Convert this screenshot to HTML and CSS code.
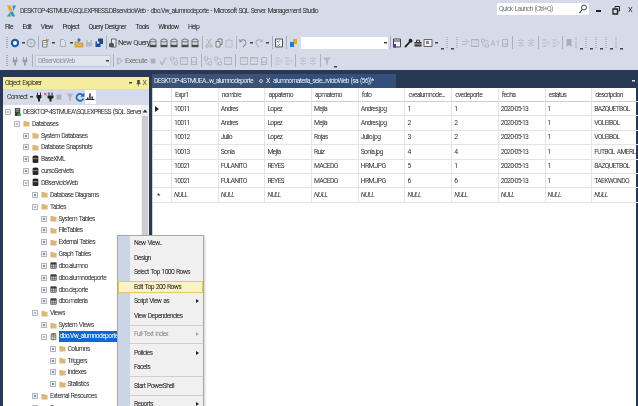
FILE: index.html
```html
<!DOCTYPE html>
<html lang="en">
<head>
<meta charset="utf-8">
<title>SSMS</title>
<link rel="stylesheet" href="styles.css">
</head>
<body>
<svg class="defs" aria-hidden="true">
  <symbol id="back" viewBox="0 0 10 10"><circle cx="5" cy="5" r="4.2" fill="#1c5fa8"/><circle cx="5" cy="5" r="2" fill="#fff"/></symbol>
  <symbol id="fwd" viewBox="0 0 10 10"><circle cx="5" cy="5" r="3.8" fill="none" stroke="#a4a9b2" stroke-width="1.4"/><circle cx="5" cy="5" r="1.2" fill="#b8bcc6"/></symbol>
  <symbol id="newp" viewBox="0 0 10 10"><path d="M2.500 2.500h4.500v6.500H2.500z" fill="#eef0f4" stroke="#666" stroke-width=".8"/><path d="M2.500 4.500h4.500M2.500 6.500h4.500" stroke="#888" stroke-width=".7"/><path d="M6 0l1 1.500L9 1 8 3l1 1-3-.4z" fill="#c98a1f"/></symbol>
  <symbol id="doc" viewBox="0 0 10 10"><path d="M2.500 1.500h3l2 2v5h-5z" fill="#dfe3ec" stroke="#a5abb7"/></symbol>
  <symbol id="open" viewBox="0 0 10 10"><path d="M1 4h3l1 1h4v4H1z" fill="#e3b04b" stroke="#b9852a" stroke-width=".6"/><path d="M5 4V1M3.500 2.300L5 .8l1.500 1.500" fill="none" stroke="#1f6fb5" stroke-width="1.200"/></symbol>
  <symbol id="save" viewBox="0 0 10 10"><path d="M2 2h6v6.500H2z" fill="#b4b9c3"/><path d="M3.500 2h3v2h-3z" fill="#dfe3ec"/></symbol>
  <symbol id="saveall" viewBox="0 0 10 10"><path d="M4 0.500h5V6H4z" fill="#23477f"/><path d="M1.500 3.500h5V9H1.500z" fill="#1c4f9c"/><path d="M3 3.500h2.200v2H3z" fill="#e8ecf4"/></symbol>
  <symbol id="nq" viewBox="0 0 10 10"><path d="M3.500 1h4.500v8H3.500z" fill="#e6e8ee" stroke="#444" stroke-width=".8"/><ellipse cx="3.500" cy="6" rx="2.500" ry="1.100" fill="#444"/><path d="M1 6v2.500c0 1 5 1 5 0V6" fill="#555"/></symbol>
  <symbol id="dbq" viewBox="0 0 10 10"><ellipse cx="5" cy="2.500" rx="3" ry="1.500" fill="#d6dcea" stroke="#555" stroke-width=".8"/><path d="M2 2.500V7M8 2.500V7" stroke="#555" stroke-width=".8"/><path d="M1.500 6.800h7v2.400h-7z" fill="#4a4a4a"/></symbol>
  <symbol id="cut" viewBox="0 0 10 10"><path d="M3 1l3.500 5.500M7 1L3.500 6.500" stroke="#b0b4be" fill="none"/><circle cx="3" cy="8" r="1.300" fill="none" stroke="#b0b4be"/><circle cx="7" cy="8" r="1.300" fill="none" stroke="#b0b4be"/></symbol>
  <symbol id="copy" viewBox="0 0 10 10"><path d="M4 1h4v5.500H4z" fill="#e3e7ef" stroke="#707070" stroke-width=".9"/><path d="M2 3.500h4v5.500H2z" fill="#e3e7ef" stroke="#707070" stroke-width=".9"/></symbol>
  <symbol id="paste" viewBox="0 0 10 10"><path d="M2 2.500h6v6.500H2z" fill="none" stroke="#b8bcc6"/><path d="M3.500 1h3v2.500h-3z" fill="#c6cad3"/></symbol>
  <symbol id="undo" viewBox="0 0 10 10"><path d="M2 3c2-2 6-1.500 6 1.500C8 6.500 6.500 7.500 5 9" fill="none" stroke="#8f949e" stroke-width="1.100"/><path d="M1 1l.5 3.500L4.500 3.500z" fill="#8f949e"/></symbol>
  <symbol id="redo" viewBox="0 0 10 10"><path d="M8 3C6 1 2 1.500 2 4.500 2 6.500 3.500 7.500 5 9" fill="none" stroke="#adb1bb" stroke-width="1.100"/><path d="M9 1l-.5 3.500L5.500 3.500z" fill="#adb1bb"/></symbol>
  <symbol id="box" viewBox="0 0 10 10"><path d="M1.500 1h7v8h-7z" fill="#eef0f5" stroke="#555"/><path d="M3 3l1.200 1.200L6 2.500M3 6.500l1.200 1.200L6 6" fill="none" stroke="#555" stroke-width=".7"/></symbol>
  <symbol id="ffile" viewBox="0 0 10 10"><path d="M5 1h4v5H5z" fill="#e5a52f"/><path d="M2 4h4v5H2z" fill="#2d77c2"/></symbol>
  <symbol id="win" viewBox="0 0 10 10"><path d="M1.500 1h7v8h-7z" fill="#eef0f5" stroke="#444"/><path d="M1.500 3h7" stroke="#444"/><path d="M1 6h3v3.500H1z" fill="#6a2c8f"/></symbol>
  <symbol id="wrench" viewBox="0 0 10 10"><path d="M8.800 1.200 7 .6 5.600 2 6 3.600 1.500 8.200l.4 1.300 1.200-.2L7.400 4.500l1.300.1L9.600 3z" fill="#1d1d1d"/></symbol>
  <symbol id="tool" viewBox="0 0 10 10"><path d="M1.500 4h7v4.500h-7z" fill="#333"/><path d="M3.500 4V2.200h3V4" fill="none" stroke="#333"/><path d="M1.500 6h7" stroke="#ddd" stroke-width=".8"/></symbol>
  <symbol id="wnd" viewBox="0 0 10 10"><path d="M1 1.500h8v7H1z" fill="#eef0f5" stroke="#666"/><path d="M3 3h3v3H3z" fill="#888"/></symbol>
  <symbol id="g1" viewBox="0 0 10 10"><path d="M2 3.500h5M2 6.500h4" stroke="#b8bdc7" stroke-width="1" fill="none"/><path d="M5.500 1l3 2.500-3 2.500" fill="none" stroke="#b8bdc7"/></symbol>
  <symbol id="g2" viewBox="0 0 10 10"><path d="M1.500 1h3v3h-3zM5.500 6h3v3h-3z" fill="none" stroke="#b5bac4"/><path d="M3 4v4h2.500M5 2.500h3v3" fill="none" stroke="#b5bac4" stroke-width=".7"/></symbol>
  <symbol id="g3" viewBox="0 0 10 10"><path d="M1.500 1.500h7v7h-7z" fill="#c8ccd6" stroke="#adb2bc"/><path d="M1.500 4h7M1.500 6.500h7" stroke="#e0e4ed"/></symbol>
  <symbol id="g4" viewBox="0 0 10 10"><path d="M2.500 1.500h5v7h-5z" fill="none" stroke="#adb2bc"/><path d="M2.500 6h5" stroke="#adb2bc"/></symbol>
  <symbol id="g5" viewBox="0 0 10 10"><path d="M2 5h6M2 2.500h2M6 2.500h2M2 7.500h2M6 7.500h2M5 1v8" stroke="#b8bdc7" stroke-width=".9" fill="none"/></symbol>
  <symbol id="g6" viewBox="0 0 10 10"><path d="M2.500 2h4M2.500 5h4M2.500 8h4" stroke="#b5bac4"/><path d="M7.500 3l1.500 2-1.500 2" fill="none" stroke="#b5bac4" stroke-width=".7"/></symbol>
  <symbol id="mark" viewBox="0 0 10 10"><path d="M2.500 1h5v8L5 7 2.500 9z" fill="#a8adb8"/></symbol>
  <symbol id="txt" viewBox="0 0 10 10"><path d="M1 8l2-6 2 6M2 6h2M6.500 3h3M8 3v5" fill="none" stroke="#b5bac4"/></symbol>
  <symbol id="plug" viewBox="0 0 10 10"><path d="M3.500 1v3M6.500 1v3" stroke="#9a9fa9"/><path d="M2.500 3.500h5v2L6 7v2.500H4V7L2.500 5.500z" fill="#9a9fa9"/></symbol>
  <symbol id="plugd" viewBox="0 0 10 10"><path d="M3.500 .5v3M6.500 .5v3" stroke="#333"/><path d="M2.500 3h5v2.500L6 7v2.500H4V7L2.500 5.500z" fill="#222"/></symbol>
  <symbol id="plugx" viewBox="0 0 10 10"><path d="M5 .5v3M8 .5v3" stroke="#222"/><path d="M3.500 3.500h6V6L7.500 7v2.500h-2V7l-2-1z" fill="#222"/><path d="M0 .8l2.500 2.500M2.500.8L0 3.300" stroke="#c43a2f" stroke-width=".9"/></symbol>
  <symbol id="stop" viewBox="0 0 10 10"><path d="M2.500 2.500h5v5h-5z" fill="#adb1bb"/></symbol>
  <symbol id="funnel" viewBox="0 0 10 10"><path d="M1 1.500h8L6 5v4L4 8V5z" fill="#b4b8c1"/></symbol>
  <symbol id="refresh" viewBox="0 0 10 10"><path d="M8 3.500A3.500 3.500 0 1 0 8.300 6.500" fill="none" stroke="#1c6cb8" stroke-width="1.700"/><path d="M9.300 .6v4.200H5.300z" fill="#1c6cb8"/></symbol>
  <symbol id="activity" viewBox="0 0 10 10"><path d="M.5 7.500h9" stroke="#333"/><path d="M2 7V5.500h1.500V7zM4.200 7V1.500h1.500V7zM6.500 7V4.500H8V7z" fill="#333"/></symbol>
  <symbol id="play" viewBox="0 0 10 10"><path d="M3 1.500L8 5 3 8.500z" fill="none" stroke="#a4a9b3"/></symbol>
  <symbol id="check" viewBox="0 0 10 10"><path d="M2 5.500L4 8.500 8 1.500" fill="none" stroke="#adb2bc" stroke-width="1.200"/></symbol>
  <symbol id="search" viewBox="0 0 10 10"><circle cx="6" cy="3.500" r="2.500" fill="none" stroke="#333" stroke-width=".9"/><path d="M4.200 5.500L1.500 9" stroke="#333" stroke-width="1.200"/></symbol>
  <symbol id="plus" viewBox="0 0 7 7"><path d="M.5.500h6v6h-6z" fill="#fff" stroke="#9aa0ac"/><path d="M2 3.500h3M3.500 2v3" stroke="#2d3a55" stroke-width=".8"/></symbol>
  <symbol id="minus" viewBox="0 0 7 7"><path d="M.5.500h6v6h-6z" fill="#fff" stroke="#9aa0ac"/><path d="M2 3.500h3" stroke="#2d3a55" stroke-width=".8"/></symbol>
  <symbol id="folder" viewBox="0 0 8 8"><path d="M.5 1h3l1 1h3v5.500h-7z" fill="#dcb67a"/></symbol>
  <symbol id="db" viewBox="0 0 8 10"><ellipse cx="4" cy="1.800" rx="3.300" ry="1.500" fill="#222"/><path d="M.7 1.800v6.300C.7 9.400 7.300 9.400 7.300 8.100V1.800z" fill="#2a2a2a"/><path d="M1.500 4h5" stroke="#bbb" stroke-width=".8"/></symbol>
  <symbol id="server" viewBox="0 0 8 10"><path d="M1 .5h6v9H1z" fill="#3a3a3a"/><path d="M2 2h4M2 4h4" stroke="#ddd" stroke-width=".8"/><circle cx="6" cy="7.800" r="2" fill="#2fa23a"/></symbol>
  <symbol id="table" viewBox="0 0 9 9"><path d="M1 1h7v7H1z" fill="#f2f2f2" stroke="#3a3a3a"/><path d="M1 3.300h7M1 5.600h7M3.300 1v7M5.700 1v7" stroke="#3a3a3a" stroke-width=".7"/><path d="M1 1h7v1.800H1z" fill="#3a3a3a"/></symbol>
  <symbol id="view" viewBox="0 0 9 9"><path d="M1.500 1h6v7.500h-6z" fill="#e8e8e8" stroke="#555"/><path d="M1.500 3h6M1.500 5h6M4.500 3v5" stroke="#555" stroke-width=".7"/><path d="M3 .5h3v1.500H3z" fill="#444"/></symbol>
  <symbol id="logo" viewBox="0 0 12 14"><path d="M1 1h4l2 5-3 2z" fill="#e8a92a"/><path d="M7 1h4L8 7z" fill="#2f8fd0"/><path d="M4 9l3-2 3 6H7z" fill="#2f8fd0"/><path d="M1 13l3-4 1.500 4z" fill="#5aa84a"/></symbol>
</svg>

<div class="app">
  <header class="title">
    <svg class="logo"><use href="#logo"/></svg>
    <span class="title-text">DESKTOP-4STMUEA\SQLEXPRESS.DBservicioWeb - dbo.Vw_alumnodeporte - Microsoft SQL Server Management Studio</span>
    <div class="quick"><span>Quick Launch (Ctrl+Q)</span><svg class="i"><use href="#search"/></svg></div>
    <div class="winbtns"><b class="min"></b><svg class="i restore" viewBox="0 0 10 10"><path d="M2 4h4.500v5H2z" fill="none" stroke="#222" stroke-width="1.300"/><path d="M4 3V1.500h4.500V6H7" fill="none" stroke="#222"/></svg><span class="close">X</span></div>
  </header>
  <nav class="menu"><span>File</span><span>Edit</span><span>View</span><span>Project</span><span>Query Designer</span><span>Tools</span><span>Window</span><span>Help</span></nav>

  <div class="tb">
    <u class="grip"></u>
    <svg class="i"><use href="#back"/></svg><em class="dd"></em><svg class="i"><use href="#fwd"/></svg><u class="sep"></u>
    <svg class="i"><use href="#newp"/></svg><em class="dd"></em><svg class="i m2"><use href="#doc"/></svg><em class="dd"></em><svg class="i"><use href="#open"/></svg><svg class="i"><use href="#save"/></svg><svg class="i"><use href="#saveall"/></svg><u class="sep"></u>
    <svg class="i"><use href="#nq"/></svg><span class="nq">New Query</span>
    <svg class="i"><use href="#dbq"/></svg><svg class="i m1"><use href="#dbq"/></svg><svg class="i"><use href="#dbq"/></svg><svg class="i m1"><use href="#dbq"/></svg><svg class="i"><use href="#dbq"/></svg><u class="sep"></u>
    <svg class="i"><use href="#cut"/></svg><svg class="i"><use href="#copy"/></svg><svg class="i"><use href="#paste"/></svg><u class="sep"></u>
    <svg class="i"><use href="#undo"/></svg><em class="dd"></em><svg class="i"><use href="#redo"/></svg><em class="dd"></em><u class="sep"></u>
    <svg class="i"><use href="#box"/></svg><u class="sep"></u><svg class="i"><use href="#ffile"/></svg>
    <div class="combo1"><em class="dd"></em></div><u class="sep"></u>
    <svg class="i"><use href="#win"/></svg><svg class="i m1"><use href="#wrench"/></svg><svg class="i"><use href="#tool"/></svg><svg class="i"><use href="#wnd"/></svg><em class="dd"></em>
    <em class="dd lo"></em><u class="grip g"></u><em class="dd lo"></em><u class="grip g"></u>
    <svg class="i m1"><use href="#g1"/></svg><svg class="i"><use href="#g3"/></svg><svg class="i"><use href="#g2"/></svg><svg class="i"><use href="#txt"/></svg><svg class="i"><use href="#g4"/></svg><u class="sep"></u>
    <svg class="i m2"><use href="#g5"/></svg><svg class="i"><use href="#g5"/></svg><u class="sep"></u><svg class="i"><use href="#g6"/></svg><svg class="i"><use href="#g6"/></svg><u class="sep"></u><svg class="i"><use href="#mark"/></svg>
    <u class="grip g"></u><em class="dd lo"></em><u class="grip g"></u><em class="dd lo"></em><u class="grip g"></u><em class="dd lo"></em><u class="grip g"></u><em class="dd lo"></em><u class="grip g"></u><em class="dd lo"></em>
  </div>
  <div class="tb tb2">
    <u class="grip"></u>
    <svg class="i"><use href="#plug"/></svg><svg class="i"><use href="#plug"/></svg><u class="sep"></u>
    <div class="combo2"><span>DBservicioWeb</span><em class="dd"></em></div><u class="sep"></u>
    <svg class="i n"><use href="#play"/></svg><span class="exec">Execute</span>
    <svg class="i"><use href="#stop"/></svg><svg class="i"><use href="#check"/></svg><svg class="i m1"><use href="#g2"/></svg><svg class="i"><use href="#g3"/></svg><svg class="i"><use href="#g4"/></svg><u class="sep"></u>
    <svg class="i"><use href="#g2"/></svg><svg class="i"><use href="#g2"/></svg><svg class="i"><use href="#g3"/></svg><u class="sep"></u>
    <svg class="i m2"><use href="#g3"/></svg><svg class="i"><use href="#g3"/></svg><svg class="i"><use href="#g4"/></svg><u class="sep"></u>
    <svg class="i"><use href="#g6"/></svg><svg class="i"><use href="#g6"/></svg><u class="sep"></u>
    <svg class="i m1"><use href="#g5"/></svg><svg class="i"><use href="#g5"/></svg><u class="sep"></u>
    <svg class="i"><use href="#funnel"/></svg><em class="dd lo"></em>
  </div>

  <main class="work">
    <section class="oe">
      <div class="oe-head"><span>Object Explorer</span><div class="oe-ctl"><em class="dd"></em><svg class="pin" viewBox="0 0 6 9"><path d="M1.500 1h3v4h1v1H3.300v3h-.6V6H.5V5h1z" fill="#444"/></svg><span class="ox">X</span></div></div>
      <div class="oe-tools"><span class="conn">Connect</span><em class="dd"></em><svg class="i"><use href="#plugd"/></svg><svg class="i"><use href="#plugx"/></svg><svg class="i"><use href="#stop"/></svg><svg class="i"><use href="#funnel"/></svg><svg class="i"><use href="#refresh"/></svg><span class="act"><svg class="i"><use href="#activity"/></svg></span></div>
      <div class="tree-wrap">
        <ul class="tree">
          <li class="l0"><svg class="x"><use href="#minus"/></svg><svg class="t srv"><use href="#server"/></svg><span>DESKTOP-4STMUEA\SQLEXPRESS (SQL Server 15</span></li>
          <li class="l1"><svg class="x"><use href="#minus"/></svg><svg class="t"><use href="#folder"/></svg><span>Databases</span></li>
          <li class="l2"><svg class="x"><use href="#plus"/></svg><svg class="t"><use href="#folder"/></svg><span>System Databases</span></li>
          <li class="l2"><svg class="x"><use href="#plus"/></svg><svg class="t"><use href="#folder"/></svg><span>Database Snapshots</span></li>
          <li class="l2"><svg class="x"><use href="#plus"/></svg><svg class="t"><use href="#db"/></svg><span>BaseXML</span></li>
          <li class="l2"><svg class="x"><use href="#plus"/></svg><svg class="t"><use href="#db"/></svg><span>cursoServlets</span></li>
          <li class="l2"><svg class="x"><use href="#minus"/></svg><svg class="t"><use href="#db"/></svg><span>DBservicioWeb</span></li>
          <li class="l3"><svg class="x"><use href="#plus"/></svg><svg class="t"><use href="#folder"/></svg><span>Database Diagrams</span></li>
          <li class="l3"><svg class="x"><use href="#minus"/></svg><svg class="t"><use href="#folder"/></svg><span>Tables</span></li>
          <li class="l4"><svg class="x"><use href="#plus"/></svg><svg class="t"><use href="#folder"/></svg><span>System Tables</span></li>
          <li class="l4"><svg class="x"><use href="#plus"/></svg><svg class="t"><use href="#folder"/></svg><span>FileTables</span></li>
          <li class="l4"><svg class="x"><use href="#plus"/></svg><svg class="t"><use href="#folder"/></svg><span>External Tables</span></li>
          <li class="l4"><svg class="x"><use href="#plus"/></svg><svg class="t"><use href="#folder"/></svg><span>Graph Tables</span></li>
          <li class="l4"><svg class="x"><use href="#plus"/></svg><svg class="t"><use href="#table"/></svg><span>dbo.alumno</span></li>
          <li class="l4"><svg class="x"><use href="#plus"/></svg><svg class="t"><use href="#table"/></svg><span>dbo.alumnodeporte</span></li>
          <li class="l4"><svg class="x"><use href="#plus"/></svg><svg class="t"><use href="#table"/></svg><span>dbo.deporte</span></li>
          <li class="l4"><svg class="x"><use href="#plus"/></svg><svg class="t"><use href="#table"/></svg><span>dbo.materia</span></li>
          <li class="l3"><svg class="x"><use href="#minus"/></svg><svg class="t"><use href="#folder"/></svg><span>Views</span></li>
          <li class="l4"><svg class="x"><use href="#plus"/></svg><svg class="t"><use href="#folder"/></svg><span>System Views</span></li>
          <li class="l4 sel"><svg class="x"><use href="#minus"/></svg><svg class="t"><use href="#view"/></svg><span>dbo.Vw_alumnodeporte</span></li>
          <li class="l5"><svg class="x"><use href="#plus"/></svg><svg class="t"><use href="#folder"/></svg><span>Columns</span></li>
          <li class="l5"><svg class="x"><use href="#plus"/></svg><svg class="t"><use href="#folder"/></svg><span>Triggers</span></li>
          <li class="l5"><svg class="x"><use href="#plus"/></svg><svg class="t"><use href="#folder"/></svg><span>Indexes</span></li>
          <li class="l5"><svg class="x"><use href="#plus"/></svg><svg class="t"><use href="#folder"/></svg><span>Statistics</span></li>
          <li class="l3"><svg class="x"><use href="#plus"/></svg><svg class="t"><use href="#folder"/></svg><span>External Resources</span></li>
          <li class="l3"><svg class="x"><use href="#plus"/></svg><svg class="t"><use href="#folder"/></svg><span>Synonyms</span></li>
        </ul>
        <div class="scroll"><svg class="up" viewBox="0 0 6 4"><path d="M3 .5L5.500 3.500H.5z" fill="#333"/></svg><div class="thumb"></div></div>
      </div>
    </section>

    <section class="doc">
      <div class="tabs">
        <div class="tab a"><span class="tname">DESKTOP-4STMUEA...w_alumnodeporte</span><i class="tpin"></i><span class="tx">X</span></div>
        <div class="tab b"><span>alumnomateria_sele...rvicioWeb (sa (56))*</span></div>
        <em class="dd w"></em>
      </div>
      <div class="grid">
        <div class="h"></div><div class="h">Expr1</div><div class="h">nombre</div><div class="h">appaterno</div><div class="h">apmaterno</div><div class="h">foto</div><div class="h">cvealumnode...</div><div class="h">cvedeporte</div><div class="h">fecha</div><div class="h">estatus</div><div class="h">descripcion</div>
        <div class="r"><svg class="rowm" viewBox="0 0 4 6"><path d="M0 0l4 3-4 3z" fill="#222"/></svg></div><div>10011</div><div>Andres</div><div>Lopez</div><div>Mejia</div><div>Andres.jpg</div><div>1</div><div>1</div><div>2020-05-13</div><div>1</div><div>BAZQUETBOL</div>
        <div class="r"></div><div>10011</div><div>Andres</div><div>Lopez</div><div>Mejia</div><div>Andres.jpg</div><div>2</div><div>2</div><div>2020-05-13</div><div>1</div><div>VOLEIBOL</div>
        <div class="r"></div><div>10012</div><div>Julio</div><div>Lopez</div><div>Rojas</div><div>Julio.jpg</div><div>3</div><div>2</div><div>2020-05-13</div><div>1</div><div>VOLEIBOL</div>
        <div class="r"></div><div>10013</div><div>Sonia</div><div>Mejia</div><div>Ruiz</div><div>Sonia.jpg</div><div>4</div><div>4</div><div>2020-05-13</div><div>1</div><div>FUTBOL AMERI...</div>
        <div class="r"></div><div>10021</div><div>FULANITO</div><div>REYES</div><div>MACEDO</div><div>HRM.JPG</div><div>5</div><div>1</div><div>2020-05-13</div><div>1</div><div>BAZQUETBOL</div>
        <div class="r"></div><div>10021</div><div>FULANITO</div><div>REYES</div><div>MACEDO</div><div>HRM.JPG</div><div>6</div><div>6</div><div>2020-05-13</div><div>1</div><div>TAEKWONDO</div>
        <div class="r star">*</div><div class="nl">NULL</div><div class="nl">NULL</div><div class="nl">NULL</div><div class="nl">NULL</div><div class="nl">NULL</div><div class="nl">NULL</div><div class="nl">NULL</div><div class="nl">NULL</div><div class="nl">NULL</div><div class="nl">NULL</div>
      </div>
    </section>
  </main>

  <div class="ctx">
    <div class="mi">New View...</div>
    <div class="mi">Design</div>
    <div class="mi">Select Top 1000 Rows</div>
    <div class="mi hot">Edit Top 200 Rows</div>
    <div class="mi arr">Script View as</div>
    <div class="mi">View Dependencies</div>
    <div class="ms"></div>
    <div class="mi off arr">Full-Text index</div>
    <div class="ms"></div>
    <div class="mi arr">Policies</div>
    <div class="mi">Facets</div>
    <div class="ms"></div>
    <div class="mi">Start PowerShell</div>
    <div class="ms"></div>
    <div class="mi arr">Reports</div>
  </div>
</div>
</body>
</html>
```
FILE: styles.css
```css
* { box-sizing: border-box; }
html, body { margin: 0; padding: 0; width: 638px; height: 406px; overflow: hidden; }
body { background: #293955; font-family: "Roboto", "Liberation Sans", sans-serif; font-size: 6.800px; letter-spacing: -.69px; word-spacing: .9px; color: #222; }
.defs { position: absolute; width: 0; height: 0; }
ul { list-style: none; margin: 0; padding: 0; }
em, u, i, b, s { font-style: normal; text-decoration: none; }

.app { position: relative; width: 638px; height: 406px; display: flex; flex-direction: column; overflow: hidden; background: #d5dbe9; filter: blur(.45px); }

.title { height: 21px; display: flex; align-items: center; padding-left: 6px; flex: none; }
.logo { width: 11px; height: 14px; margin-right: 3px; flex: none; }
.title-text { color: #333; white-space: nowrap; }
.quick { position: absolute; left: 497px; top: 3px; width: 92px; height: 12px; background: #fff; display: flex; align-items: center; justify-content: space-between; padding: 0 1px 0 2px; color: #777; }
.winbtns { position: absolute; left: 594px; top: 3px; display: flex; align-items: center; height: 13px; }
.min { display: block; width: 5px; height: 2px; background: #222; margin: 3px 10px 0 2px; }
.restore { margin-right: 7px; }
.close { font-size: 7.500px; letter-spacing: 0; }

.menu { height: 12px; flex: none; display: flex; align-items: center; gap: 9.600px; padding-left: 5px; color: #222; }

.tb { height: 17px; flex: none; display: flex; align-items: center; padding-left: 5px; margin-top: 1px; color: #444; }
.tb2 { margin-bottom: 1px; }
.i { width: 10px; height: 10px; flex: none; }
.i.m1 { margin-left: 1px; }
.i.m2 { margin-left: 2px; }
.i.n { width: 9px; }
.grip { display: block; width: 4px; height: 12px; flex: none; background: repeating-linear-gradient(#a5abb9 0 1px, transparent 1px 2px) center / 2px 100% no-repeat; }
.tb > .grip:first-child { margin-right: 1px; }
.grip.g { background-image: repeating-linear-gradient(#b6bcc9 0 1px, transparent 1px 2px); }
.sep { display: block; width: 4px; height: 13px; flex: none; background: linear-gradient(#a9b0bf, #a9b0bf) center / 1px 100% no-repeat; }
.dd { display: block; width: 6px; height: 10px; flex: none; background: linear-gradient(#444, #444) center / 3px 1.500px no-repeat; }
.dd.lo { height: 14px; background-position: center bottom; }
.dd.w { margin-left: auto; margin-right: 2px; background-image: linear-gradient(#ddd, #ddd); }
.nq { width: 30px; color: #333; white-space: nowrap; flex: none; font-size: 7.500px; letter-spacing: -.6px; }
.combo1 { width: 87px; height: 12px; margin-left: 3px; background: #fff; flex: none; display: flex; justify-content: flex-end; align-items: center; }
.combo2 { width: 76px; height: 12px; margin-left: 1px; flex: none; display: flex; justify-content: space-between; align-items: center; background: #dfe4ef; border: 1px solid #c2c8d6; padding-left: 2px; color: #8d929d; }
.exec { width: 24px; padding-left: 1px; color: #777; flex: none; font-size: 7.500px; letter-spacing: -.6px; }

.work { flex: 1; min-height: 0; display: flex; background: #293955; padding: 4px 0 0 3px; }

.oe { width: 146px; flex: none; display: flex; flex-direction: column; background: #fff; margin-top: 3px; }
.oe-head { height: 12px; flex: none; display: flex; align-items: center; justify-content: space-between; padding: 0 2px; background: #f5ec9d; color: #333; }
.oe-ctl { display: flex; align-items: center; gap: 2px; }
.pin { width: 5px; height: 8px; }
.ox { font-size: 7px; letter-spacing: 0; color: #555; }
.oe-tools { height: 16px; flex: none; display: flex; align-items: center; padding-left: 4px; background: #d5dbe9; }
.conn { width: 21px; color: #333; flex: none; }
.oe-tools .i { margin-right: .2px; }
.act { display: block; width: 11px; height: 14px; padding-top: 2px; background: #fff; }
.tree-wrap { flex: 1; min-height: 0; display: flex; overflow: hidden; }
.tree { width: 138px; flex: none; padding-top: 1px; overflow: hidden; }
.tree li { height: 11.850px; display: flex; align-items: center; white-space: nowrap; color: #333; }
.l0 { padding-left: 2px; }
.l1 { padding-left: 11px; }
.l2 { padding-left: 20px; }
.l3 { padding-left: 29px; }
.l4 { padding-left: 37.500px; }
.l5 { padding-left: 46.500px; }
.x { width: 6px; height: 6px; flex: none; margin-right: 3px; }
.t { width: 7px; height: 9px; flex: none; margin-right: 2px; }
.tree .srv { height: 10px; }
.tree .sel span { background: #0a69d4; color: #fff; padding: 0 1px; height: 11px; line-height: 11px; }
.scroll { width: 8px; flex: none; background: #f0f0f0; display: flex; flex-direction: column; align-items: center; }
.up { width: 6px; height: 4px; margin: 4px 0 3px; flex: none; }
.thumb { flex: 1; width: 6px; background: #cdcdcd; }

.doc { flex: 1; min-width: 0; display: flex; flex-direction: column; margin-left: 3px; }
.tabs { height: 14px; flex: none; display: flex; align-items: center; color: #e8edf5; }
.tab { height: 14px; display: flex; align-items: center; padding-left: 2px; flex: none; white-space: nowrap; }
.tab.a { width: 119px; background: #3c5275; }
.tab.b { width: 125px; background: #32507a; }
.tname { width: 103px; flex: none; }
.tpin { display: block; width: 4px; height: 4px; border: 1px solid #ccd; border-radius: 50%; margin: 0 3px 0 2px; flex: none; }
.tx { font-size: 7px; letter-spacing: 0; }
.grid { flex: 1; min-height: 0; margin-right: 2px; background: #fff; display: grid; grid-template-columns: 19px repeat(10, 46.700px); grid-template-rows: 14px; grid-auto-rows: 14.400px; align-content: start; border-left: 1px solid #d0d0d0; }
.grid > div { display: flex; align-items: center; padding-left: 2px; border-right: 1px solid #e4e4e4; border-bottom: 1px solid #e4e4e4; white-space: nowrap; overflow: hidden; color: #333; }
.grid .h { border-bottom: 1px solid #cfcfcf; padding-left: 3px; }
.grid .nl { font-style: italic; }
.rowm { width: 4px; height: 6px; }
.grid .star { font-size: 8px; padding-left: 4px; }

.ctx { position: absolute; left: 117px; top: 235px; width: 87px; height: 171px; overflow: hidden; background: linear-gradient(90deg, #ccd5e5 12px, #f0f0f0 12px); border: 1px solid #a8a8a8; border-bottom: 0; box-shadow: 1px 1px 2px rgba(0,0,0,.2); }
.mi { height: 14.500px; line-height: 14.500px; padding-left: 16px; position: relative; color: #222; white-space: nowrap; }
.mi.hot { background: #fbf3c0; box-shadow: inset 0 0 0 1px #e3c66a; height: 12.500px; line-height: 12.500px; margin: 1px 0; }
.mi.off { color: #8c8c8c; }
.mi.arr::after { content: ""; position: absolute; right: 4px; top: 5px; border-left: 3px solid #222; border-top: 2.500px solid transparent; border-bottom: 2.500px solid transparent; }
.mi.off.arr::after { border-left-color: #aaa; }
.ms { height: 4px; margin-left: 12px; background: linear-gradient(#cfcfcf, #cfcfcf) center / 100% 1px no-repeat; }
```
